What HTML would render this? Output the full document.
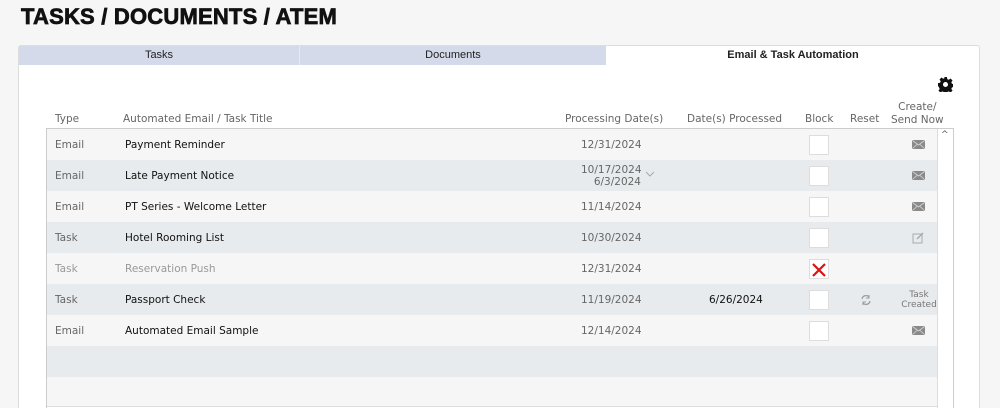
<!DOCTYPE html>
<html><head><style>
*{box-sizing:border-box;margin:0;padding:0}
html,body{width:1000px;height:408px;overflow:hidden}
body{background:#f6f6f6;font-family:"DejaVu Sans","Liberation Sans",sans-serif;position:relative}
h1{position:absolute;left:21px;top:4px;font-family:"Liberation Sans",sans-serif;font-weight:900;font-size:22px;letter-spacing:.2px;color:#111;-webkit-text-stroke:.7px #111}
.panel{position:absolute;left:18px;top:45px;width:962px;height:363px;background:#fff;border:1px solid #ddd;border-bottom:none;border-radius:3px 3px 0 0}
.tab{position:absolute;top:0;height:19px;font:11px "Liberation Sans",sans-serif;color:#222;text-align:center;line-height:18px}
.hd{position:absolute;font-size:10.5px;color:#666}
.box{position:absolute;left:46px;top:128px;width:908px;height:280px;border:1px solid #ccc;border-bottom:none;background:#fff}
.row{position:absolute;left:0;width:890px;height:31px;font-size:10.5px;line-height:32px}
.row span{position:absolute}
.cb{position:absolute;left:762px;top:6px;width:20px;height:20px;background:#fff;border:1px solid #ddd}
.env{position:absolute;left:865px;top:11px}
</style></head><body>
<h1>TASKS / DOCUMENTS / ATEM</h1>
<div class="panel">
<div class="tab" style="left:0;width:280px;background:#d5daea">Tasks</div>
<div class="tab" style="left:280px;width:307px;background:#d5daea;border-left:1px solid #e8eaf2">Documents</div>
<div class="tab" style="left:587px;width:374px;font-weight:bold">Email &amp; Task Automation</div>
</div>
<svg style="position:absolute;left:938px;top:77px" width="15" height="15" viewBox="0 0 16 16"><path fill="#111" d="M6.5 0h3l.4 2.2 1.6.7 1.9-1.3 2.1 2.1-1.3 1.9.7 1.6 2.1.4v3l-2.1.4-.7 1.6 1.3 1.9-2.1 2.1-1.9-1.3-1.6.7-.4 2.2h-3l-.4-2.2-1.6-.7-1.9 1.3-2.1-2.1 1.3-1.9-.7-1.6L0 9.5v-3l2.2-.4.7-1.6-1.3-1.9 2.1-2.1 1.9 1.3 1.6-.7zM8 5.3A2.7 2.7 0 1 0 8 10.7 2.7 2.7 0 1 0 8 5.3z"/></svg>
<div class="hd" style="left:55px;top:113px">Type</div>
<div class="hd" style="left:123px;top:113px">Automated Email / Task Title</div>
<div class="hd" style="left:565px;top:113px">Processing Date(s)</div>
<div class="hd" style="left:687px;top:113px">Date(s) Processed</div>
<div class="hd" style="left:805px;top:113px">Block</div>
<div class="hd" style="left:850px;top:113px">Reset</div>
<div class="hd" style="left:891px;top:101px;text-align:center;line-height:13px">Create/<br>Send Now</div>
<div class="box">
<div style="position:absolute;left:890px;top:0;width:16px;height:290px;border-left:1px solid #ddd;background:#fff"></div>
<div style="position:absolute;left:894px;top:1px;font-size:9px;color:#555">^</div>
<div class="row" style="top:0;background:#f6f6f6"><span style="left:8px;color:#666">Email</span><span style="left:78px;color:#111">Payment Reminder</span><span style="left:534px;color:#666">12/31/2024</span><div class="cb"></div><svg class="env" width="13" height="9" viewBox="0 0 13 9"><rect width="13" height="9" rx="1" fill="#8a8a8a"/><path d="M0.5 0.5l6 4.5 6-4.5M0.5 8.5l4.5-4M12.5 8.5l-4.5-4" stroke="#d8d8d8" fill="none" stroke-width=".8"/></svg></div>
<div class="row" style="top:31px;background:#e8ebee"><span style="left:8px;color:#666">Email</span><span style="left:78px;color:#111">Late Payment Notice</span><span style="left:534px;color:#666;line-height:12px;top:4px;text-align:right;width:60px">10/17/2024<br>6/3/2024</span><svg style="position:absolute;left:598px;top:11px" width="10" height="7"><path d="M1 1l4 4 4-4" stroke="#aaa" fill="none"/></svg><div class="cb"></div><svg class="env" width="13" height="9" viewBox="0 0 13 9"><rect width="13" height="9" rx="1" fill="#8a8a8a"/><path d="M0.5 0.5l6 4.5 6-4.5M0.5 8.5l4.5-4M12.5 8.5l-4.5-4" stroke="#d8d8d8" fill="none" stroke-width=".8"/></svg></div>
<div class="row" style="top:62px;background:#f6f6f6"><span style="left:8px;color:#666">Email</span><span style="left:78px;color:#111">PT Series - Welcome Letter</span><span style="left:534px;color:#666">11/14/2024</span><div class="cb"></div><svg class="env" width="13" height="9" viewBox="0 0 13 9"><rect width="13" height="9" rx="1" fill="#8a8a8a"/><path d="M0.5 0.5l6 4.5 6-4.5M0.5 8.5l4.5-4M12.5 8.5l-4.5-4" stroke="#d8d8d8" fill="none" stroke-width=".8"/></svg></div>
<div class="row" style="top:93px;background:#e8ebee"><span style="left:8px;color:#666">Task</span><span style="left:78px;color:#111">Hotel Rooming List</span><span style="left:534px;color:#666">10/30/2024</span><div class="cb"></div><svg style="position:absolute;left:865px;top:9px" width="13" height="13"><rect x="1" y="3" width="9" height="9" fill="none" stroke="#aaa"/><path d="M5 8l6-6" stroke="#aaa" stroke-width="1.5"/></svg></div>
<div class="row" style="top:124px;background:#f6f6f6"><span style="left:8px;color:#999">Task</span><span style="left:78px;color:#999">Reservation Push</span><span style="left:534px;color:#666">12/31/2024</span><div class="cb"><svg width="18" height="18" viewBox="0 0 18 18"><path d="M3 3l12 12M15 3L3 15" stroke="#d11" stroke-width="2.2"/></svg></div></div>
<div class="row" style="top:155px;background:#e8ebee"><span style="left:8px;color:#666">Task</span><span style="left:78px;color:#111">Passport Check</span><span style="left:534px;color:#666">11/19/2024</span><span style="left:662px;color:#111">6/26/2024</span><div class="cb"></div><svg style="position:absolute;left:813px;top:10px" width="12" height="12" viewBox="0 0 12 12"><path d="M2 5a4 4 0 0 1 7-2M10 7a4 4 0 0 1-7 2" fill="none" stroke="#999" stroke-width="1.2"/><path d="M9 1v3h-3M3 11v-3h3" fill="none" stroke="#999"/></svg><span style="left:850px;width:44px;text-align:center;line-height:10px;top:6px;font-size:9px;color:#777">Task<br>Created</span></div>
<div class="row" style="top:186px;background:#f6f6f6"><span style="left:8px;color:#666">Email</span><span style="left:78px;color:#111">Automated Email Sample</span><span style="left:534px;color:#666">12/14/2024</span><div class="cb"></div><svg class="env" width="13" height="9" viewBox="0 0 13 9"><rect width="13" height="9" rx="1" fill="#8a8a8a"/><path d="M0.5 0.5l6 4.5 6-4.5M0.5 8.5l4.5-4M12.5 8.5l-4.5-4" stroke="#d8d8d8" fill="none" stroke-width=".8"/></svg></div>
<div class="row" style="top:217px;background:#e8ebee"></div>
<div class="row" style="top:248px;background:#f6f6f6;height:30px;border-bottom:1px solid #ddd"></div>
</div>
</body></html>
